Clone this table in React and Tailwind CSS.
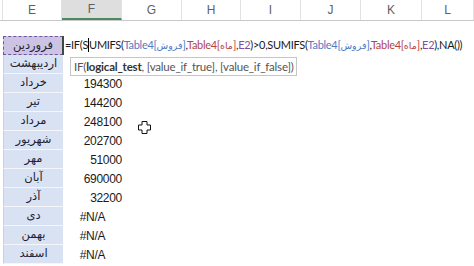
import React from 'react'

const cols = [
  { key: 'D', w: 'w-[3px]' },
  { key: 'E', w: 'w-[59px]' },
  { key: 'F', w: 'w-[60px]' },
  { key: 'G', w: 'w-[60px]' },
  { key: 'H', w: 'w-[59px]' },
  { key: 'I', w: 'w-[60px]' },
  { key: 'J', w: 'w-[60px]' },
  { key: 'K', w: 'w-[61px]' },
  { key: 'L', w: 'flex-1' },
]

const months = [
  { name: 'فروردین', value: null },
  { name: 'اردیبهشت', value: null },
  { name: 'خرداد', value: '194300' },
  { name: 'تیر', value: '144200' },
  { name: 'مرداد', value: '248100' },
  { name: 'شهریور', value: '202700' },
  { name: 'مهر', value: '51000' },
  { name: 'آبان', value: '690000' },
  { name: 'آذر', value: '32200' },
  { name: 'دی', value: '#N/A' },
  { name: 'بهمن', value: '#N/A' },
  { name: 'اسفند', value: '#N/A' },
]

// structured reference like Table4[فروش]
const Ref = ({ col, color }) => (
  <span className={color}>
    Table4[<bdi className="text-[9.5px] font-['DejaVu_Sans',sans-serif]">{col}</bdi>]
  </span>
)

const Formula = () => (
  <div className="whitespace-nowrap text-[11px] tracking-[-0.3px] text-[#1a1a1a] font-['Lato','DejaVu_Sans',sans-serif] leading-[18px]">
    =IF(S<span className="inline-block w-px h-[14px] bg-black align-middle -mt-[2px]" />UMIFS(
    <Ref col="فروش" color="text-[#4f7bc4]" />,<Ref col="ماه" color="text-[#b5453f]" />,
    <span className="text-[#7b4fa8]">E2</span>)&gt;0,SUMIFS(
    <Ref col="فروش" color="text-[#4f7bc4]" />,<Ref col="ماه" color="text-[#b5453f]" />,
    <span className="text-[#7b4fa8]">E2</span>),NA())
  </div>
)

const PlusCursor = () => (
  <svg width="15" height="15" viewBox="0 0 15 15">
    <path
      d="M5 1.5h5v3.5h3.5v5h-3.5v3.5h-5v-3.5h-3.5v-5h3.5z"
      fill="#fff"
      stroke="#111"
      strokeWidth="1"
      strokeLinejoin="round"
    />
  </svg>
)

export default function App() {
  return (
    <div className="relative w-[474px] h-[266px] bg-white overflow-hidden font-['Liberation_Sans',sans-serif]">
      {/* column headers */}
      <div className="flex h-[21px] border-b border-[#c8c8c8]">
        {cols.map((c) => (
          <div
            key={c.key}
            className={`${c.w} shrink-0 flex items-center justify-center text-[12px] text-[#5f5f5f] border-r border-[#e2e2e2] ${
              c.key === 'F' ? 'bg-[#dedede] border-b-2 border-b-[#4a8a5c]' : ''
            }`}
          >
            {c.key === 'D' ? '' : c.key}
          </div>
        ))}
      </div>

      <div className="h-[15px]" />

      {/* rows */}
      <div className="flex flex-col">
        {months.map((m, i) => (
          <div key={m.name} className="flex h-[19px]">
            <div className="w-[3px] shrink-0" />
            <div
              className={`w-[60px] shrink-0 flex items-center justify-center text-[11.5px] text-[#1e2433] font-['DejaVu_Sans',sans-serif] ${
                i === 0
                  ? 'bg-[#cdc4e4] border border-dashed border-[#6e55a0]'
                  : 'bg-[#d9e2f3] border-b border-b-[#f4f6fb] border-l border-l-[#c5d0e6]'
              }`}
              dir="rtl"
            >
              {m.name}
            </div>
            {i === 0 ? (
              <div className="flex items-center shrink-0 pl-[1px] border-l-2 border-[#3c4a3f] -ml-px">
                <Formula />
              </div>
            ) : (
              <div
                className={`w-[59px] shrink-0 flex items-center text-[12px] tracking-[-0.3px] text-[#1a1a1a] ${
                  m.value === '#N/A' ? 'justify-center' : 'justify-end'
                }`}
              >
                {m.value}
              </div>
            )}
          </div>
        ))}
      </div>

      {/* function tooltip */}
      <div className="absolute left-[70px] top-[57px] w-[227px] h-[19px] bg-white border border-[#c6c6c6] flex items-center pl-[3px] text-[11.5px] text-[#555] whitespace-nowrap font-['Lato','Liberation_Sans',sans-serif] tracking-[-0.2px]">
        IF(<span className="font-bold text-[#333]">logical_test</span>, [value_if_true], [value_if_false])
      </div>

      {/* mouse cursor */}
      <div className="absolute left-[137px] top-[120px]">
        <PlusCursor />
      </div>
    </div>
  )
}
